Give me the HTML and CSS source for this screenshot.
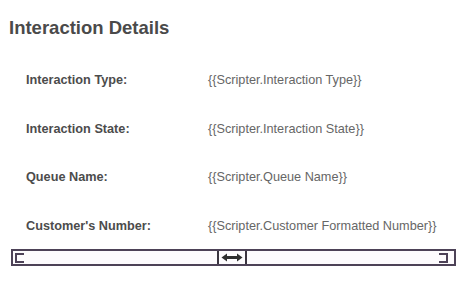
FILE: index.html
```html
<!DOCTYPE html>
<html>
<head>
<meta charset="utf-8">
<link rel="stylesheet" href="styles.css">
</head>
<body>
<h1 class="title">Interaction Details</h1>
<div class="details">
  <div class="row"><span class="label">Interaction Type:</span><span class="value">{{Scripter.Interaction Type}}</span></div>
  <div class="row"><span class="label">Interaction State:</span><span class="value">{{Scripter.Interaction State}}</span></div>
  <div class="row"><span class="label">Queue Name:</span><span class="value">{{Scripter.Queue Name}}</span></div>
  <div class="row"><span class="label">Customer's Number:</span><span class="value">{{Scripter.Customer Formatted Number}}</span></div>
</div>
<div class="splitter">
  <div class="pane pane-left"><span class="bracket bracket-left"></span></div>
  <div class="handle">
    <svg width="22" height="9" viewBox="0 0 22 9"><path d="M0.5 4.5 L6 0.5 L6 3 L16 3 L16 0.5 L21.5 4.5 L16 8.5 L16 6 L6 6 L6 8.5 Z" fill="#2f2f2f"/></svg>
  </div>
  <div class="pane pane-right"><span class="bracket bracket-right"></span></div>
</div>
</body>
</html>
```
FILE: styles.css
```css
html, body {
  margin: 0;
  padding: 0;
  background: #ffffff;
}
body {
  font-family: "Liberation Sans", Arial, sans-serif;
}
.title {
  margin: 16px 0 0 9px;
  font-size: 18.5px;
  line-height: 24px;
  font-weight: bold;
  color: #4a4a4a;
}
.details {
  margin: 32px 0 0 26px;
  display: flex;
  flex-direction: column;
  gap: 32.7px;
}
.row {
  display: grid;
  grid-template-columns: 182px 1fr;
  font-size: 12.7px;
  line-height: 16px;
}
.label {
  font-weight: bold;
  color: #4c4c4c;
}
.value {
  color: #666666;
}
.splitter {
  margin: 15.3px 0 0 11px;
  width: 445px;
  height: 17px;
  display: flex;
  box-sizing: border-box;
  border: 2px solid #4d4257;
  background: #fdfbfd;
}
.pane {
  display: flex;
  align-items: center;
}
.pane-left {
  width: 202px;
  padding-left: 2px;
}
.pane-right {
  flex: 1;
  justify-content: flex-end;
  padding-right: 6px;
}
.handle {
  width: 26px;
  border-left: 2px solid #3b3540;
  border-right: 2px solid #3b3540;
  display: flex;
  align-items: center;
  justify-content: center;
}
.bracket {
  display: block;
  width: 7px;
  height: 6px;
  border: 2px solid #4d4257;
}
.bracket-left {
  border-right: none;
}
.bracket-right {
  border-left: none;
}
```
